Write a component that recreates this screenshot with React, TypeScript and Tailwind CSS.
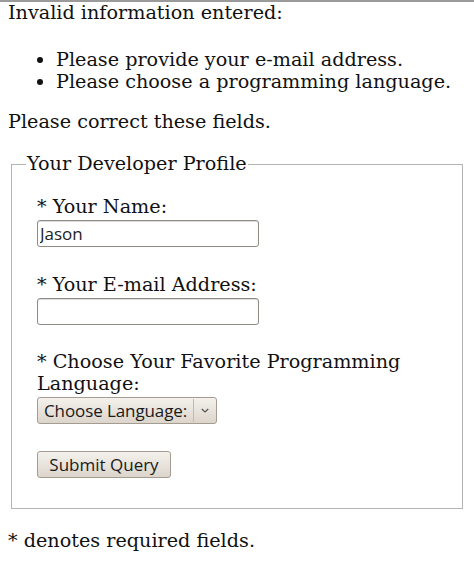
import React from 'react';

export default function App() {
  return (
    <div className="min-h-[562px] w-[474px] bg-white border-t-2 border-[#9a9a9a] font-['DejaVu_Serif',serif] text-[19.2px] leading-[22px] text-[#111]">
      <p className="pl-[8px]">Invalid information entered:</p>

      <ul className="list-disc pl-[56px] mt-[25px]">
        <li>Please provide your e-mail address.</li>
        <li>Please choose a programming language.</li>
      </ul>

      <p className="pl-[8px] mt-[18px]">Please correct these fields.</p>

      <fieldset className="mx-[11px] mt-[20px] border border-[#b3b3b3] pl-[14px] pr-[25px] pb-[30px]">
        <legend className="px-[1px]">Your Developer Profile</legend>

        <div className="pl-[11px]">
          <div className="mt-[21px]">
            <label className="block">* Your Name:</label>
            <input
              type="text"
              defaultValue="Jason"
              className="mt-[2px] block w-[222px] h-[27px] rounded-[3px] border border-[#8f8a84] bg-white px-[2px] shadow-[inset_0_1px_1px_rgba(0,0,0,0.15)] font-['Open_Sans',sans-serif] text-[17px] text-[#222] outline-none"
            />
          </div>

          <div className="mt-[27px]">
            <label className="block">* Your E-mail Address:</label>
            <input
              type="text"
              className="mt-[2px] block w-[222px] h-[27px] rounded-[3px] border border-[#8f8a84] bg-white px-[2px] shadow-[inset_0_1px_1px_rgba(0,0,0,0.15)] font-['Open_Sans',sans-serif] text-[17px] outline-none"
            />
          </div>

          <div className="mt-[26px]">
            <label className="block">* Choose Your Favorite Programming Language:</label>
            <div className="mt-[2px] flex items-center w-[180px] h-[27px] rounded-[3px] border border-[#a49b91] bg-gradient-to-b from-[#f4f1ec] to-[#dcd5cc] font-['Open_Sans',sans-serif] text-[17px] text-[#1a1a1a]">
              <span className="flex-1 pl-[6px] whitespace-nowrap tracking-[-0.1px]">Choose Language:</span>
              <span className="h-[23px] w-px bg-[#c2b9ae]" />
              <svg className="w-[22px] h-full" viewBox="0 0 22 27">
                <path d="M7.5 12 L11 15 L14.5 12" fill="none" stroke="#555" strokeWidth="1.4" />
              </svg>
            </div>
          </div>

          <button className="mt-[27px] block w-[134px] h-[27px] rounded-[3px] border border-[#a49b91] bg-gradient-to-b from-[#f4f1ec] to-[#dcd5cc] font-['Open_Sans',sans-serif] text-[17px] text-[#1a1a1a]">
            Submit Query
          </button>
        </div>
      </fieldset>

      <p className="pl-[8px] mt-[21px]">* denotes required fields.</p>
    </div>
  );
}
